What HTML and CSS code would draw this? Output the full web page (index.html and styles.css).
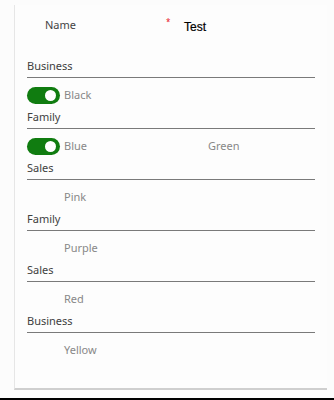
FILE: index.html
```html
<!DOCTYPE html>
<html>
<head>
<meta charset="utf-8">
<link rel="stylesheet" href="styles.css">
</head>
<body>
<div class="page">
  <div class="card">
    <div class="name-row">
      <span class="name-label">Name</span>
      <span class="required">*</span>
      <span class="name-value">Test</span>
    </div>

    <div class="group">
      <div class="group-head">Business</div>
      <div class="items">
        <div class="item"><span class="toggle on"><span class="knob"></span></span><span class="item-text">Black</span></div>
      </div>
    </div>

    <div class="group">
      <div class="group-head">Family</div>
      <div class="items">
        <div class="item"><span class="toggle on"><span class="knob"></span></span><span class="item-text">Blue</span></div>
        <div class="item"><span class="toggle-space"></span><span class="item-text">Green</span></div>
      </div>
    </div>

    <div class="group">
      <div class="group-head">Sales</div>
      <div class="items">
        <div class="item"><span class="toggle-space"></span><span class="item-text">Pink</span></div>
      </div>
    </div>

    <div class="group">
      <div class="group-head">Family</div>
      <div class="items">
        <div class="item"><span class="toggle-space"></span><span class="item-text">Purple</span></div>
      </div>
    </div>

    <div class="group">
      <div class="group-head">Sales</div>
      <div class="items">
        <div class="item"><span class="toggle-space"></span><span class="item-text">Red</span></div>
      </div>
    </div>

    <div class="group">
      <div class="group-head">Business</div>
      <div class="items">
        <div class="item"><span class="toggle-space"></span><span class="item-text">Yellow</span></div>
      </div>
    </div>
  </div>
</div>
</body>
</html>
```

FILE: styles.css
```css
html {
  margin: 0;
  padding: 0;
  background: #000;
}
body {
  margin: 0;
  padding: 0;
  font-family: "Noto Sans", "Open Sans", sans-serif;
  font-size: 11px;
}
.page {
  height: 398px;
  background: #fcfcfc;
  padding-top: 5px;
  box-sizing: border-box;
}
.card {
  margin-left: 14px;
  width: 313px;
  height: 385px;
  box-sizing: border-box;
  background: #fdfdfd;
  border-left: 1px solid #e6e6e6;
  border-bottom: 2px solid #cfcfcf;
  padding: 0 12px 0 12px;
}
.name-row {
  display: flex;
  align-items: center;
  height: 40px;
  padding-left: 18px;
  margin-bottom: 13px;
}
.name-label {
  width: 121px;
  color: #444;
  line-height: 16px;
}
.required {
  color: #e81123;
  font-size: 8px;
  width: 18px;
  margin-top: -6px;
  line-height: 10px;
}
.name-value {
  font-family: "Liberation Sans", Arial, sans-serif;
  font-size: 12px;
  color: #000;
  margin-top: 4px;
  -webkit-text-stroke: 0.2px #000;
}
.group {
  display: flex;
  flex-direction: column;
}
.group-head {
  color: #404040;
  line-height: 16px;
  padding-bottom: 3px;
  width: 288px;
  border-bottom: 1px solid #7a7a7a;
}
.items {
  display: flex;
  height: 28px;
  padding-top: 3px;
  align-items: center;
}
.item {
  display: flex;
  align-items: center;
  width: 181px;
  gap: 4px;
}
.item-text {
  color: #888;
  line-height: 16px;
}
.toggle {
  position: relative;
  display: inline-block;
  width: 33px;
  height: 17px;
  border-radius: 9px;
  background: #107c10;
}
.knob {
  position: absolute;
  right: 4px;
  top: 3px;
  width: 11px;
  height: 11px;
  border-radius: 50%;
  background: #fff;
}
.toggle-space {
  display: inline-block;
  width: 33px;
  height: 17px;
}
```
